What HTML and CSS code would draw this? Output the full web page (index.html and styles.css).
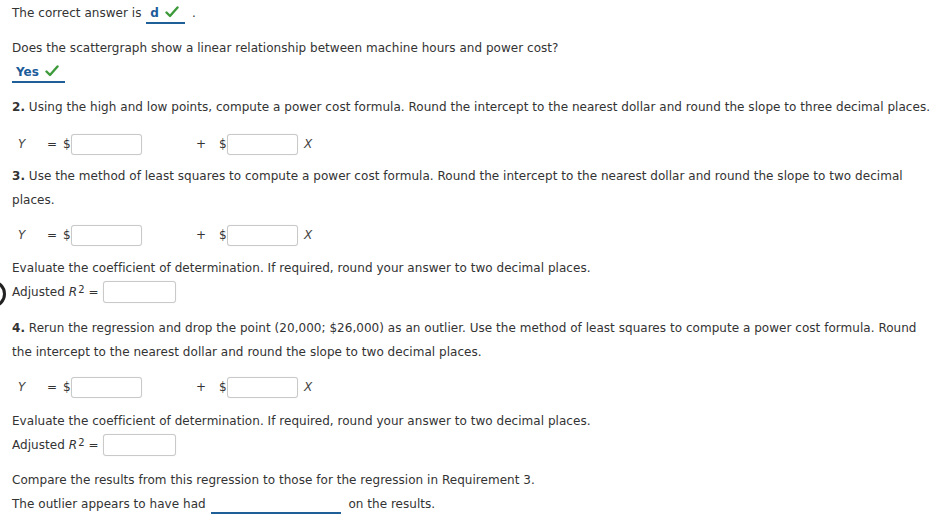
FILE: index.html
```html
<!DOCTYPE html>
<html>
<head>
<meta charset="utf-8">
<link rel="stylesheet" href="styles.css">
</head>
<body>
<div class="edge-arc"></div>
<main class="page">
  <div class="block first">
    <p class="line">The correct answer is <span class="answer ans-d">d <svg class="check" viewBox="0 0 14 12" width="14" height="12"><polyline points="1.5,6.5 5,10 12.5,1.5" /></svg></span> <span class="dot">.</span></p>
  </div>
  <div class="block">
    <p class="line">Does the scattergraph show a linear relationship between machine hours and power cost?</p>
    <p class="line yes-line"><span class="answer ans-yes">Yes <svg class="check" viewBox="0 0 14 12" width="14" height="12"><polyline points="1.5,6.5 5,10 12.5,1.5" /></svg></span></p>
  </div>
  <div class="block wide">
    <p class="line"><b>2.</b> Using the high and low points, compute a power cost formula. Round the intercept to the nearest dollar and round the slope to three decimal places.</p>
  </div>
  <div class="block formula snug">
    <span class="var-y">Y</span><span class="eq">=</span><span class="cur">$</span><span class="box"></span><span class="plus">+</span><span class="cur">$</span><span class="box"></span><span class="var-x">X</span>
  </div>
  <div class="block">
    <p class="line wrap"><b>3.</b> Use the method of least squares to compute a power cost formula. Round the intercept to the nearest dollar and round the slope to two decimal places.</p>
  </div>
  <div class="block formula">
    <span class="var-y">Y</span><span class="eq">=</span><span class="cur">$</span><span class="box"></span><span class="plus">+</span><span class="cur">$</span><span class="box"></span><span class="var-x">X</span>
  </div>
  <div class="block loose">
    <p class="line">Evaluate the coefficient of determination. If required, round your answer to two decimal places.</p>
    <p class="line adj">Adjusted <i class="r">R</i><sup>2</sup> <span class="eq2">=</span><span class="box box-r"></span></p>
  </div>
  <div class="block">
    <p class="line wrap"><b>4.</b> Rerun the regression and drop the point (20,000; $26,000) as an outlier. Use the method of least squares to compute a power cost formula. Round the intercept to the nearest dollar and round the slope to two decimal places.</p>
  </div>
  <div class="block formula roomy">
    <span class="var-y">Y</span><span class="eq">=</span><span class="cur">$</span><span class="box"></span><span class="plus">+</span><span class="cur">$</span><span class="box"></span><span class="var-x">X</span>
  </div>
  <div class="block">
    <p class="line">Evaluate the coefficient of determination. If required, round your answer to two decimal places.</p>
    <p class="line adj">Adjusted <i class="r">R</i><sup>2</sup> <span class="eq2">=</span><span class="box box-r"></span></p>
  </div>
  <div class="block">
    <p class="line">Compare the results from this regression to those for the regression in Requirement 3.</p>
    <p class="line">The outlier appears to have had <span class="blank"></span> on the results.</p>
  </div>
</main>
</body>
</html>
```
FILE: styles.css
```css
html, body {
  margin: 0;
  padding: 0;
  background: #fff;
}
body {
  font-family: Verdana, "DejaVu Sans", sans-serif;
  font-size: 12px;
  letter-spacing: 0.035px;
  color: #333;
  position: relative;
  overflow: hidden;
  height: 525px;
}
.page {
  padding: 0 0 0 12px;
  display: flex;
  flex-direction: column;
}
.block {
  margin-bottom: 11px;
}
.block.loose {
  margin-bottom: 12px;
}
.block.wide {
  margin-bottom: 13px;
}
.block.formula {
  margin-bottom: 9px;
}
.block.formula.snug {
  margin-bottom: 8px;
}
.block.formula.roomy {
  margin-bottom: 10px;
}
.block.first {
  padding-top: 1px;
  margin-bottom: 11px;
}
.line {
  margin: 0;
  line-height: 24px;
  white-space: nowrap;
}
.line.wrap {
  white-space: normal;
  padding-right: 20px;
}
.yes-line {
  padding-top: 1px;
  line-height: 23px;
}
b { font-weight: bold; color: #333; }

.answer {
  display: inline-block;
  color: #1c5c9a;
  font-weight: bold;
  border-bottom: 2px solid #1f5f98;
  line-height: 17px;
  margin-top: 1px;
}
.ans-d {
  padding: 0 6px 0 4px;
  margin-left: 1px;
}
.ans-yes {
  padding: 0 6px 0 4px;
}
.dot { margin-left: 3px; }
.check {
  vertical-align: -1px;
  margin-left: 2px;
}
.check polyline {
  fill: none;
  stroke: #3d9a3b;
  stroke-width: 2.4;
  stroke-linecap: round;
  stroke-linejoin: round;
}

.formula {
  display: flex;
  align-items: center;
  height: 24px;
  padding-left: 6px;
  font-size: 12px;
}
.var-y, .var-x {
  font-style: italic;
  color: #444;
}
.var-y { width: 29px; }
.eq { width: 16px; }
.cur { width: 8px; }
.plus { margin-left: 54px; width: 23px; }
.var-x { margin-left: 6px; }
.box {
  display: inline-block;
  width: 69px;
  height: 19px;
  border: 1px solid #c9c9c9;
  border-radius: 3px;
  box-shadow: 0 0 1px rgba(0,0,0,0.15);
  background: #fff;
}
.adj {
  display: flex;
  align-items: center;
}
.adj .r {
  font-style: italic;
  margin-left: 4px;
}
.adj sup {
  font-size: 10px;
  line-height: 0;
  position: relative;
  top: -2px;
  vertical-align: super;
  margin-left: 1px;
}
.eq2 { margin-left: 4px; margin-right: 4px; }
.box-r {
  width: 71px;
  height: 20px;
}
.blank {
  display: inline-block;
  width: 130px;
  height: 14px;
  border-bottom: 2px solid #1f5f98;
  vertical-align: -6px;
  margin: 0 4px 0 1px;
}
.edge-arc {
  position: absolute;
  left: -22px;
  top: 280px;
  width: 22px;
  height: 22px;
  border: 3px solid #222;
  border-radius: 50%;
}
```
